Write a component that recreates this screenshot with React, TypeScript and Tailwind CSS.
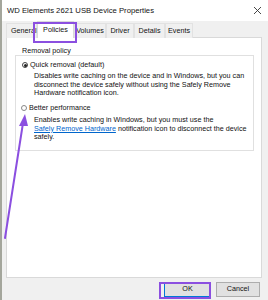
import React from "react";

export default function App() {
  const tabs = [
    { label: "General", w: "w-[31px] justify-start pl-[4px]", sel: false },
    { label: "Policies", w: "w-[37px] justify-center", sel: true },
    { label: "Volumes", w: "w-[32px] justify-center", sel: false },
    { label: "Driver", w: "w-[28px] justify-center", sel: false },
    { label: "Details", w: "w-[31px] justify-center", sel: false },
    { label: "Events", w: "w-[28px] justify-center", sel: false },
  ];
  return (
    <div className="w-[268px] h-[300px] flex bg-[#f0f0f0] relative overflow-hidden font-['Liberation_Sans',Arial,sans-serif] text-[#111]">
      <div className="w-[2px] bg-[#a4a69c]" />
      <div className="flex-1 flex flex-col">
        {/* Title bar */}
        <div className="h-[21px] bg-white flex items-center justify-between pl-[5px] pr-[6px]">
          <span className="text-[7.7px] leading-[9px] whitespace-nowrap">WD Elements 2621 USB Device Properties</span>
          <svg width="9" height="9" viewBox="0 0 9 9" className="text-[#333]">
            <path d="M1 1 L8 8 M8 1 L1 8" stroke="currentColor" strokeWidth="0.9" fill="none" />
          </svg>
        </div>
        {/* Tabs */}
        <div className="h-[17px] flex items-end pl-[4px] relative z-10 -mb-px">
          {tabs.map((t) => (
            <div
              key={t.label}
              className={`${t.w} ${t.sel ? "h-[17px] bg-white border-[#d9d9d9]" : "h-[15px] bg-[#f0f0f0] border-[#e2e2e2]"} border border-b-0 flex items-center text-[7.2px] leading-[8px] whitespace-nowrap`}
            >
              {t.label}
            </div>
          ))}
        </div>
        {/* Pane */}
        <div className="ml-[4px] w-[256px] h-[241px] bg-white border border-[#d9d9d9] flex flex-col">
          <div className="mt-[9px] ml-[8px] w-[239px] flex flex-col text-[7.2px]">
            <div className="h-[8px] leading-[8px] pl-[7px] whitespace-nowrap">Removal policy</div>
            <div className="border border-[#e0e0e0] h-[96px] flex flex-col pt-[5px]">
              <div className="flex items-center h-[8.5px] pl-[6px] gap-[2px]">
                <span className="w-[6px] h-[6px] rounded-full border border-[#444] flex items-center justify-center">
                  <span className="w-[3px] h-[3px] rounded-full bg-[#222]" />
                </span>
                <span className="leading-[8.5px] whitespace-nowrap">Quick removal (default)</span>
              </div>
              <div className="mt-[2.5px] pl-[18px] leading-[8.5px] whitespace-nowrap">
                Disables write caching on the device and in Windows, but you can
                <br />
                disconnect the device safely without using the Safely Remove
                <br />
                Hardware notification icon.
              </div>
              <div className="mt-[6.5px] flex items-center h-[8.5px] pl-[5px] gap-[2px]">
                <span className="w-[6px] h-[6px] rounded-full border border-[#888] bg-white" />
                <span className="leading-[8.5px] whitespace-nowrap">Better performance</span>
              </div>
              <div className="mt-[3.5px] pl-[18px] leading-[8.5px] whitespace-nowrap">
                Enables write caching in Windows, but you must use the
                <br />
                <span className="text-[#0066cc] underline">Safely Remove Hardware</span> notification icon to disconnect the device
                <br />
                safely.
              </div>
            </div>
          </div>
        </div>
        {/* Bottom buttons */}
        <div className="flex-1 flex justify-end items-start pt-[4px] pr-[8px] gap-[5px]">
          <div className="w-[47px] h-[15px] bg-[#e1e1e1] border border-[#0078d7] flex items-center justify-center text-[7.2px]">OK</div>
          <div className="w-[44px] h-[15px] bg-[#e1e1e1] border border-[#adadad] flex items-center justify-center text-[7.2px]">Cancel</div>
        </div>
      </div>

      {/* Annotations */}
      <div className="absolute left-[33px] top-[22px] w-[44px] h-[21px] border-2 border-[#8b4fe0] z-20" />
      <div className="absolute left-[159px] top-[282px] w-[52px] h-[17px] border-2 border-[#8b4fe0] z-20" />
      <svg className="absolute left-0 top-0 z-20 pointer-events-none" width="268" height="300" viewBox="0 0 268 300">
        <line x1="5" y1="238" x2="23" y2="123" stroke="#8b4fe0" strokeWidth="2" strokeLinecap="round" />
        <polygon points="25,114 19,126 28,126" fill="#8b4fe0" />
      </svg>
    </div>
  );
}
